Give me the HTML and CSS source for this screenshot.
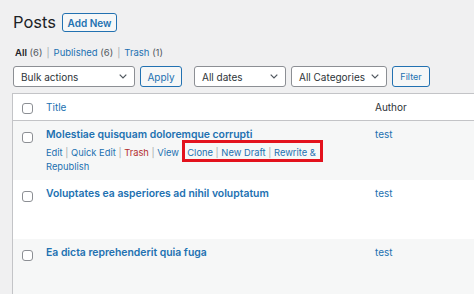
FILE: index.html
```html
<!DOCTYPE html>
<html lang="en">
<head>
<meta charset="utf-8">
<title>Posts</title>
<link rel="stylesheet" href="styles.css">
</head>
<body>
<div class="wrap">
  <div class="page-head">
    <h1 class="page-title">Posts</h1>
    <a class="btn-outline" href="#">Add New</a>
  </div>

  <ul class="subsubsub">
    <li><span class="current">All</span> <span class="count">(6)</span></li>
    <li class="sep">|</li>
    <li><a href="#">Published</a> <span class="count">(6)</span></li>
    <li class="sep">|</li>
    <li><a href="#">Trash</a> <span class="count">(1)</span></li>
  </ul>

  <div class="tablenav">
    <div class="select w-bulk">Bulk actions <svg class="chev" viewBox="0 0 8 5" width="8" height="5"><polyline points="0.7,0.7 4,4 7.3,0.7" fill="none" stroke="#50575e" stroke-width="1.2"/></svg></div>
    <a class="btn" href="#">Apply</a>
    <div class="select w-dates">All dates <svg class="chev" viewBox="0 0 8 5" width="8" height="5"><polyline points="0.7,0.7 4,4 7.3,0.7" fill="none" stroke="#50575e" stroke-width="1.2"/></svg></div>
    <div class="select w-cats">All Categories <svg class="chev" viewBox="0 0 8 5" width="8" height="5"><polyline points="0.7,0.7 4,4 7.3,0.7" fill="none" stroke="#50575e" stroke-width="1.2"/></svg></div>
    <a class="btn btn-filter" href="#">Filter</a>
  </div>

  <div class="list-table">
    <div class="row head">
      <div class="cell cb"><span class="checkbox"></span></div>
      <div class="cell title"><a href="#">Title</a></div>
      <div class="cell author">Author</div>
    </div>

    <div class="row alt">
      <div class="cell cb"><span class="checkbox"></span></div>
      <div class="cell title">
        <a class="post-title" href="#">Molestiae quisquam doloremque corrupti</a>
        <div class="row-actions">
          <a href="#">Edit</a> <span class="bar">|</span> <a href="#">Quick&nbsp;Edit</a> <span class="bar">|</span> <a class="danger" href="#">Trash</a> <span class="bar">|</span> <a href="#">View</a> <span class="bar">|</span> <span class="highlight"><a href="#">Clone</a> <span class="bar">|</span> <a href="#">New&nbsp;Draft</a> <span class="bar">|</span> <a href="#">Rewrite &amp;</a></span> <a href="#">Republish</a>
        </div>
      </div>
      <div class="cell author"><a href="#">test</a></div>
    </div>

    <div class="row">
      <div class="cell cb"><span class="checkbox"></span></div>
      <div class="cell title"><a class="post-title" href="#">Voluptates ea asperiores ad nihil voluptatum</a></div>
      <div class="cell author"><a href="#">test</a></div>
    </div>

    <div class="row alt">
      <div class="cell cb"><span class="checkbox"></span></div>
      <div class="cell title"><a class="post-title" href="#">Ea dicta reprehenderit quia fuga</a></div>
      <div class="cell author"><a href="#">test</a></div>
    </div>
  </div>
</div>
</body>
</html>
```

FILE: styles.css
```css
* { box-sizing: border-box; }

html, body {
  margin: 0;
  padding: 0;
  background: #f0f0f1;
  overflow: hidden;
}

body {
  font-family: Inter, "Liberation Sans", Arial, sans-serif;
  font-size: 10px;
  color: #2c3338;
  width: 474px;
  height: 294px;
}

a { color: #2271b1; text-decoration: none; }

.wrap {
  padding: 13px 0 0 12px;
}

.page-head {
  display: flex;
  align-items: center;
  height: 19px;
}

.page-title {
  margin: 0 6px 0 1px;
  font-size: 16.5px;
  font-weight: 400;
  line-height: 19px;
  color: #1d2327;
}

.btn-outline {
  display: flex;
  align-items: center;
  justify-content: center;
  width: 55px;
  height: 19px;
  border: 1px solid #2271b1;
  border-radius: 3px;
  background: #f6f7f7;
  font-size: 10px;
  font-weight: 600;
  color: #2271b1;
}

.subsubsub {
  list-style: none;
  margin: 14px 0 0 3px;
  padding: 0;
  display: flex;
  gap: 4px;
  line-height: 14px;
  font-size: 9.5px;
}

.subsubsub .current { font-weight: 600; color: #1d2327; }
.subsubsub .count { color: #50575e; }
.subsubsub .sep { color: #a7aaad; }

.tablenav {
  margin-top: 6px;
  display: flex;
  align-items: center;
  height: 21px;
  padding-left: 1px;
}

.select {
  display: flex;
  align-items: center;
  justify-content: space-between;
  height: 21px;
  padding: 0 7px 0 7px;
  border: 1px solid #8c8f94;
  border-radius: 3px;
  background: #fff;
  font-size: 10px;
  color: #2c3338;
}

.w-bulk { width: 122px; }
.w-dates { width: 92px; margin-left: 12px; }
.w-cats { width: 96px; margin-left: 5px; }

.btn {
  display: flex;
  align-items: center;
  justify-content: center;
  height: 21px;
  width: 42px;
  margin-left: 5px;
  border: 1px solid #2271b1;
  border-radius: 3px;
  background: #f6f7f7;
  font-size: 10px;
  color: #2271b1;
}

.btn-filter { width: 38px; font-size: 9px; }

.list-table {
  margin-top: 6px;
  width: 470px;
  border: 1px solid #c3c4c7;
  background: #fff;
}

.row {
  display: grid;
  grid-template-columns: 25px 329px 1fr;
  height: 59px;
}

.row.alt { background: #f6f7f7; }

.row.head {
  height: 27px;
  border-bottom: 1px solid #c3c4c7;
  background: #fff;
  align-items: center;
}

.cell { line-height: 14px; }

.cb { padding: 11px 0 0 9px; }
.head .cb { padding: 2px 0 0 9px; }

.checkbox {
  display: block;
  width: 11px;
  height: 11px;
  border: 1px solid #8c8f94;
  border-radius: 3px;
  background: #fff;
}

.title, .author { padding: 6px 8px 0 8px; }
.head .title, .head .author { padding-top: 0; }

.head .author { color: #2c3338; }

.post-title {
  font-size: 10.4px;
  font-weight: 600;
  color: #2271b1;
}

.row-actions {
  margin-top: 4px;
  font-size: 9.35px;
  line-height: 14px;
}

.row-actions .bar { color: #a7aaad; }
.row-actions .danger { color: #b32d2e; }

.highlight { position: relative; }

.highlight::after {
  content: "";
  position: absolute;
  left: -5px;
  right: -7px;
  top: -7px;
  bottom: -4px;
  border: 3px solid #e3121d;
}
```
